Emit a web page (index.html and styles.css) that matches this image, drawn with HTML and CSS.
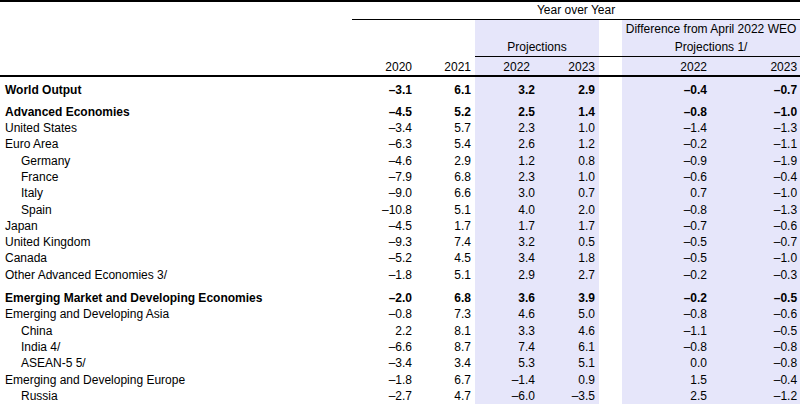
FILE: index.html
```html
<!DOCTYPE html>
<html lang="en">
<head>
<meta charset="utf-8">
<title>World Economic Outlook Projections</title>
<link rel="stylesheet" href="styles.css">
</head>
<body>
<table class="weo">
  <colgroup>
    <col class="w-label">
    <col class="w-2020">
    <col class="w-2021">
    <col class="w-p22">
    <col class="w-p23">
    <col class="w-gap">
    <col class="w-d22">
    <col class="w-d23">
  </colgroup>
  <thead>
    <tr class="h1">
      <th></th>
      <th colspan="7" class="yoy">Year over Year</th>
    </tr>
    <tr class="h2">
      <th></th>
      <th></th>
      <th></th>
      <th colspan="2" class="shade rule proj">Projections</th>
      <th class="rule"></th>
      <th colspan="2" class="shade rule diff">Difference from April 2022 WEO<br>Projections 1/</th>
    </tr>
    <tr class="h3">
      <th></th>
      <th class="n c20">2020</th>
      <th class="n c21">2021</th>
      <th class="n shade c22h">2022</th>
      <th class="n shade c23">2023</th>
      <th></th>
      <th class="n shade d22">2022</th>
      <th class="n shade d23">2023</th>
    </tr>
  </thead>
  <tbody>
    <tr class="bold first">
      <td class="lbl">World Output</td>
      <td class="n c20">–3.1</td><td class="n c21">6.1</td>
      <td class="n shade c22">3.2</td><td class="n shade c23">2.9</td><td></td>
      <td class="n shade d22">–0.4</td><td class="n shade d23">–0.7</td>
    </tr>
    <tr class="bold sep">
      <td class="lbl">Advanced Economies</td>
      <td class="n c20">–4.5</td><td class="n c21">5.2</td>
      <td class="n shade c22">2.5</td><td class="n shade c23">1.4</td><td></td>
      <td class="n shade d22">–0.8</td><td class="n shade d23">–1.0</td>
    </tr>
    <tr>
      <td class="lbl">United States</td>
      <td class="n c20">–3.4</td><td class="n c21">5.7</td>
      <td class="n shade c22">2.3</td><td class="n shade c23">1.0</td><td></td>
      <td class="n shade d22">–1.4</td><td class="n shade d23">–1.3</td>
    </tr>
    <tr>
      <td class="lbl">Euro Area</td>
      <td class="n c20">–6.3</td><td class="n c21">5.4</td>
      <td class="n shade c22">2.6</td><td class="n shade c23">1.2</td><td></td>
      <td class="n shade d22">–0.2</td><td class="n shade d23">–1.1</td>
    </tr>
    <tr>
      <td class="lbl sub">Germany</td>
      <td class="n c20">–4.6</td><td class="n c21">2.9</td>
      <td class="n shade c22">1.2</td><td class="n shade c23">0.8</td><td></td>
      <td class="n shade d22">–0.9</td><td class="n shade d23">–1.9</td>
    </tr>
    <tr>
      <td class="lbl sub">France</td>
      <td class="n c20">–7.9</td><td class="n c21">6.8</td>
      <td class="n shade c22">2.3</td><td class="n shade c23">1.0</td><td></td>
      <td class="n shade d22">–0.6</td><td class="n shade d23">–0.4</td>
    </tr>
    <tr>
      <td class="lbl sub">Italy</td>
      <td class="n c20">–9.0</td><td class="n c21">6.6</td>
      <td class="n shade c22">3.0</td><td class="n shade c23">0.7</td><td></td>
      <td class="n shade d22">0.7</td><td class="n shade d23">–1.0</td>
    </tr>
    <tr>
      <td class="lbl sub">Spain</td>
      <td class="n c20">–10.8</td><td class="n c21">5.1</td>
      <td class="n shade c22">4.0</td><td class="n shade c23">2.0</td><td></td>
      <td class="n shade d22">–0.8</td><td class="n shade d23">–1.3</td>
    </tr>
    <tr>
      <td class="lbl">Japan</td>
      <td class="n c20">–4.5</td><td class="n c21">1.7</td>
      <td class="n shade c22">1.7</td><td class="n shade c23">1.7</td><td></td>
      <td class="n shade d22">–0.7</td><td class="n shade d23">–0.6</td>
    </tr>
    <tr>
      <td class="lbl">United Kingdom</td>
      <td class="n c20">–9.3</td><td class="n c21">7.4</td>
      <td class="n shade c22">3.2</td><td class="n shade c23">0.5</td><td></td>
      <td class="n shade d22">–0.5</td><td class="n shade d23">–0.7</td>
    </tr>
    <tr>
      <td class="lbl">Canada</td>
      <td class="n c20">–5.2</td><td class="n c21">4.5</td>
      <td class="n shade c22">3.4</td><td class="n shade c23">1.8</td><td></td>
      <td class="n shade d22">–0.5</td><td class="n shade d23">–1.0</td>
    </tr>
    <tr>
      <td class="lbl">Other Advanced Economies 3/</td>
      <td class="n c20">–1.8</td><td class="n c21">5.1</td>
      <td class="n shade c22">2.9</td><td class="n shade c23">2.7</td><td></td>
      <td class="n shade d22">–0.2</td><td class="n shade d23">–0.3</td>
    </tr>
    <tr class="bold sep2">
      <td class="lbl">Emerging Market and Developing Economies</td>
      <td class="n c20">–2.0</td><td class="n c21">6.8</td>
      <td class="n shade c22">3.6</td><td class="n shade c23">3.9</td><td></td>
      <td class="n shade d22">–0.2</td><td class="n shade d23">–0.5</td>
    </tr>
    <tr>
      <td class="lbl">Emerging and Developing Asia</td>
      <td class="n c20">–0.8</td><td class="n c21">7.3</td>
      <td class="n shade c22">4.6</td><td class="n shade c23">5.0</td><td></td>
      <td class="n shade d22">–0.8</td><td class="n shade d23">–0.6</td>
    </tr>
    <tr>
      <td class="lbl sub">China</td>
      <td class="n c20">2.2</td><td class="n c21">8.1</td>
      <td class="n shade c22">3.3</td><td class="n shade c23">4.6</td><td></td>
      <td class="n shade d22">–1.1</td><td class="n shade d23">–0.5</td>
    </tr>
    <tr>
      <td class="lbl sub">India 4/</td>
      <td class="n c20">–6.6</td><td class="n c21">8.7</td>
      <td class="n shade c22">7.4</td><td class="n shade c23">6.1</td><td></td>
      <td class="n shade d22">–0.8</td><td class="n shade d23">–0.8</td>
    </tr>
    <tr>
      <td class="lbl sub">ASEAN-5 5/</td>
      <td class="n c20">–3.4</td><td class="n c21">3.4</td>
      <td class="n shade c22">5.3</td><td class="n shade c23">5.1</td><td></td>
      <td class="n shade d22">0.0</td><td class="n shade d23">–0.8</td>
    </tr>
    <tr>
      <td class="lbl">Emerging and Developing Europe</td>
      <td class="n c20">–1.8</td><td class="n c21">6.7</td>
      <td class="n shade c22">–1.4</td><td class="n shade c23">0.9</td><td></td>
      <td class="n shade d22">1.5</td><td class="n shade d23">–0.4</td>
    </tr>
    <tr>
      <td class="lbl sub">Russia</td>
      <td class="n c20">–2.7</td><td class="n c21">4.7</td>
      <td class="n shade c22">–6.0</td><td class="n shade c23">–3.5</td><td></td>
      <td class="n shade d22">2.5</td><td class="n shade d23">–1.2</td>
    </tr>
  </tbody>
</table>
</body>
</html>
```
FILE: styles.css
```css
html, body {
  margin: 0;
  padding: 0;
  background: #ffffff;
}

body {
  font-family: "Liberation Sans", Arial, sans-serif;
  font-size: 12px;
  color: #000000;
}

.weo {
  width: 800px;
  table-layout: fixed;
  border-collapse: separate;
  border-spacing: 0;
  border-top: 2px solid #000000;
}

.w-label { width: 352px; }
.w-2020 { width: 64px; }
.w-2021 { width: 59px; }
.w-p22 { width: 64px; }
.w-p23 { width: 60px; }
.w-gap { width: 23px; }
.w-d22 { width: 89px; }
.w-d23 { width: 89px; }

.weo th,
.weo td {
  padding: 0;
  font-weight: normal;
  white-space: nowrap;
  vertical-align: bottom;
}

/* header row 1 */
.h1 th {
  line-height: 17px;
}
.yoy {
  text-align: center;
  border-bottom: 1px solid #000000;
}

/* header row 2 */
.h2 th {
  line-height: 18px;
}
.rule {
  border-bottom: 1px solid #000000;
}
.proj {
  text-align: center;
}
.diff {
  text-align: center;
  padding-right: 4px;
}

/* header row 3 */
.h3 th {
  line-height: 15px;
  padding-top: 3px;
  border-bottom: 2px solid #000000;
}

.shade {
  background: #e6e6fa;
}

.n {
  text-align: right;
}
.c20, .c21, .c22, .c23, .d22 { padding-right: 4px; }
.weo .c20, .weo .c21, .weo .c22, .weo .c23, .weo .d22 { padding-right: 4px; }
.weo .d23 { padding-right: 3px; }
.weo .c22h { padding-right: 9px; }

/* body rows */
.weo tbody td {
  line-height: 16.3px;
}
.weo tbody tr td:nth-child(6) {
  background: #ffffff;
}
.lbl {
  text-align: left;
}
.weo .lbl {
  padding-left: 5px;
}
.weo .lbl.sub {
  padding-left: 21px;
}

.weo tr.bold td {
  font-weight: bold;
}

.weo tr.first td { padding-top: 5.3px; }
.weo tr.sep td { padding-top: 5.2px; }
.weo tr.sep2 td { padding-top: 7px; }
```
